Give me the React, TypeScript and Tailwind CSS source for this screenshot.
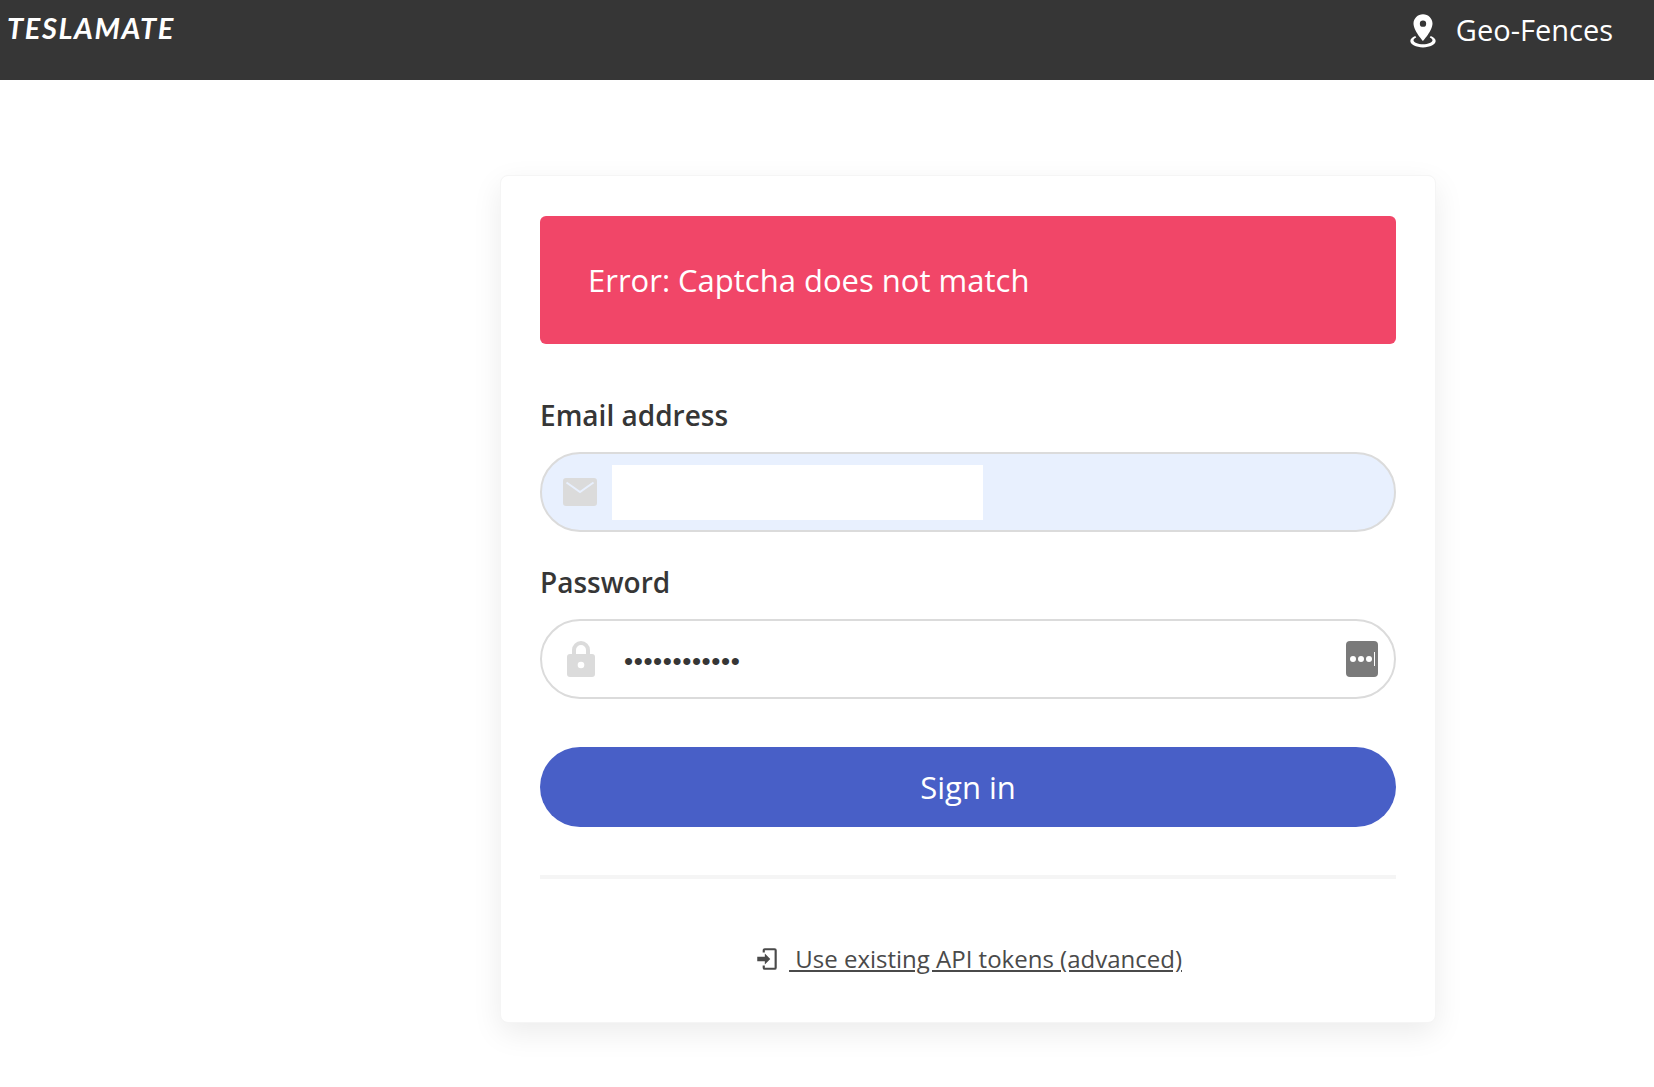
const sans = "font-['Open_Sans','Noto_Sans',sans-serif]";

function MarkerIcon() {
  return (
    <svg width="38" height="38" viewBox="0 0 24 24" fill="currentColor">
      <path d="M12,2C15.31,2 18,4.66 18,7.95C18,12.41 12,19 12,19C12,19 6,12.41 6,7.95C6,4.66 8.69,2 12,2M12,6A2,2 0 0,0 10,8A2,2 0 0,0 12,10A2,2 0 0,0 14,8A2,2 0 0,0 12,6M20,19C20,21.21 16.42,23 12,23C7.58,23 4,21.21 4,19C4,17.71 5.22,16.56 7.11,15.83L7.75,16.74C6.67,17.19 6,17.81 6,18.5C6,19.88 8.69,21 12,21C15.31,21 18,19.88 18,18.5C18,17.81 17.33,17.19 16.25,16.74L16.89,15.83C18.78,16.56 20,17.71 20,19Z" />
    </svg>
  );
}

function EnvelopeIcon() {
  return (
    <svg width="34" height="28" viewBox="0 0 34 28" className="shrink-0">
      <rect width="34" height="28" rx="3" fill="#dbdbdb" />
      <path d="M3.5 4.5 17 14 30.5 4.5" fill="none" stroke="#e8f0fe" strokeWidth="2" />
    </svg>
  );
}

function LockIcon() {
  return (
    <svg width="28" height="36" viewBox="0 0 28 36" className="shrink-0">
      <path d="M7 15V9a7 7 0 0 1 14 0v6" fill="none" stroke="#dbdbdb" strokeWidth="4" />
      <rect y="13" width="28" height="23" rx="3" fill="#dbdbdb" />
      <circle cx="14" cy="24" r="3.3" fill="#fff" />
    </svg>
  );
}

function PasswordManagerIcon() {
  return (
    <div className="flex h-[36px] w-[32px] shrink-0 items-center justify-center gap-[2px] rounded-[4px] bg-[#7a7a7a]">
      <span className="h-[6px] w-[6px] rounded-full bg-white" />
      <span className="h-[6px] w-[6px] rounded-full bg-white" />
      <span className="h-[6px] w-[6px] rounded-full bg-white" />
      <span className="h-[14px] w-[1px] bg-white" />
    </div>
  );
}

function LoginIcon() {
  return (
    <svg width="26" height="26" viewBox="0 0 24 24" fill="#4a4a4a">
      <path d="M10,17V14H3V10H10V7L15,12L10,17M10,2H19A2,2 0 0,1 21,4V20A2,2 0 0,1 19,22H10A2,2 0 0,1 8,20V18H10V20H19V4H10V6H8V4A2,2 0 0,1 10,2Z" />
    </svg>
  );
}

export default function App() {
  return (
    <div className={`min-h-[1087px] bg-white ${sans} text-[#363636]`}>
      <nav className="flex h-[80px] items-start justify-between bg-[#363636] text-white">
        <span className="ml-[7px] mt-[10px] font-['Lato',sans-serif] text-[29px] font-bold italic leading-[36px] tracking-[1.6px]">
          TESLAMATE
        </span>
        <a className="mr-[41px] mt-[11px] flex items-center gap-[14px] text-[29px] leading-[38px]">
          <MarkerIcon />
          Geo-Fences
        </a>
      </nav>

      <main className="ml-[500px] mt-[95px] w-[936px] rounded-[8px] border border-[#f5f5f5] bg-white px-[39px] pb-[47px] pt-[40px] shadow-[0_10px_30px_rgba(10,10,10,0.08)]">
        <div className="flex h-[128px] items-center rounded-[6px] bg-[#f14668] pl-[48px] text-[31px] text-white">
          Error: Captcha does not match
        </div>

        <form className="mt-[52px]">
          <label className="block text-[28px] font-semibold leading-[38px]">Email address</label>
          <div className="mt-[18px] flex h-[80px] items-center rounded-full border-2 border-[#dbdbdb] bg-[#e8f0fe] pl-[21px]">
            <EnvelopeIcon />
            <input className="ml-[15px] h-[55px] w-[371px] bg-white outline-none" />
          </div>

          <label className="mt-[31px] block text-[28px] font-semibold leading-[38px]">Password</label>
          <div className="mt-[18px] flex h-[80px] items-center rounded-full border-2 border-[#dbdbdb] bg-white pl-[25px] pr-[16px]">
            <LockIcon />
            <input
              type="password"
              readOnly
              defaultValue="abcdefghijkl"
              className="ml-[29px] min-w-0 flex-1 bg-transparent pt-[4px] font-['Liberation_Sans',sans-serif] text-[26px] tracking-[0.6px] text-[#363636] outline-none"
            />
            <PasswordManagerIcon />
          </div>

          <button
            type="button"
            className="mt-[48px] flex h-[80px] w-full items-center justify-center rounded-full bg-[#485fc7] text-[31px] text-white"
          >
            Sign in
          </button>
        </form>

        <hr className="mt-[48px] h-[4px] border-0 bg-[#f5f5f5]" />

        <div className="mt-[64px] flex items-center justify-center text-[24px] leading-[32px] text-[#4a4a4a]">
          <LoginIcon />
          <a className="ml-[9px] underline">&nbsp;Use existing API tokens (advanced)</a>
        </div>
      </main>
    </div>
  );
}
